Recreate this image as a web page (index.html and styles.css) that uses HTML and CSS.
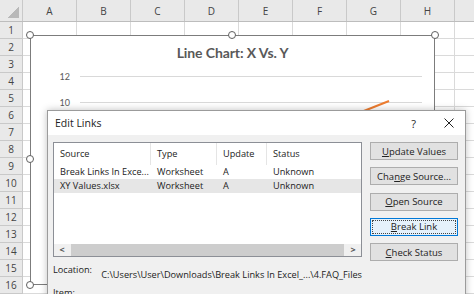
FILE: index.html
```html
<!DOCTYPE html>
<html lang="en">

<head>
    <meta charset="UTF-8" />
    <meta name="viewport" content="width=device-width, initial-scale=1.0" />
    <title>Edit Links</title>
    <link rel="stylesheet" href="styles.css">
</head>

<body>
    <table class="sheet">
        <colgroup>
            <col class="col-rh">
            <col class="col"><col class="col"><col class="col"><col class="col">
            <col class="col"><col class="col"><col class="col"><col class="col">
            <col class="col-rest">
        </colgroup>
        <tr class="head">
            <th class="corner"></th>
            <th>A</th><th>B</th><th>C</th><th>D</th><th>E</th><th>F</th><th>G</th><th>H</th><th></th>
        </tr>
        <tr><th>1</th><td></td><td></td><td></td><td></td><td></td><td></td><td></td><td></td><td></td></tr>
        <tr><th>2</th><td></td><td></td><td></td><td></td><td></td><td></td><td></td><td></td><td></td></tr>
        <tr><th>3</th><td></td><td></td><td></td><td></td><td></td><td></td><td></td><td></td><td></td></tr>
        <tr><th>4</th><td></td><td></td><td></td><td></td><td></td><td></td><td></td><td></td><td></td></tr>
        <tr><th>5</th><td></td><td></td><td></td><td></td><td></td><td></td><td></td><td></td><td></td></tr>
        <tr><th>6</th><td></td><td></td><td></td><td></td><td></td><td></td><td></td><td></td><td></td></tr>
        <tr><th>7</th><td></td><td></td><td></td><td></td><td></td><td></td><td></td><td></td><td></td></tr>
        <tr><th>8</th><td></td><td></td><td></td><td></td><td></td><td></td><td></td><td></td><td></td></tr>
        <tr><th>9</th><td></td><td></td><td></td><td></td><td></td><td></td><td></td><td></td><td></td></tr>
        <tr><th>10</th><td></td><td></td><td></td><td></td><td></td><td></td><td></td><td></td><td></td></tr>
        <tr><th>11</th><td></td><td></td><td></td><td></td><td></td><td></td><td></td><td></td><td></td></tr>
        <tr><th>12</th><td></td><td></td><td></td><td></td><td></td><td></td><td></td><td></td><td></td></tr>
        <tr><th>13</th><td></td><td></td><td></td><td></td><td></td><td></td><td></td><td></td><td></td></tr>
        <tr><th>14</th><td></td><td></td><td></td><td></td><td></td><td></td><td></td><td></td><td></td></tr>
        <tr><th>15</th><td></td><td></td><td></td><td></td><td></td><td></td><td></td><td></td><td></td></tr>
        <tr><th>16</th><td></td><td></td><td></td><td></td><td></td><td></td><td></td><td></td><td></td></tr>
    </table>

    <div class="chart">
        <span class="handle h-tl"></span>
        <span class="handle h-tm"></span>
        <span class="handle h-tr"></span>
        <span class="handle h-ml"></span>
        <span class="handle h-bl"></span>

        <div class="chart-title">Line Chart: X Vs. Y</div>
        <svg class="plot" width="403" height="200" viewBox="0 0 403 200">
            <line x1="49" y1="14.5" x2="391" y2="14.5" stroke="#d9d9d9" stroke-width="1" />
            <line x1="49" y1="40.5" x2="391" y2="40.5" stroke="#d9d9d9" stroke-width="1" />
            <text x="39" y="17.5" text-anchor="end" class="axis">12</text>
            <text x="39" y="43.5" text-anchor="end" class="axis">10</text>
            <!-- series, mostly hidden behind the dialog -->
            <line x1="300" y1="62" x2="358" y2="39" stroke="#ed7d31" stroke-width="2" />
        </svg>
    </div>

    <div class="dialog">
        <div class="titlebar">
            <span class="dlg-title">Edit Links</span>
            <span class="help">?</span>
            <svg class="close" width="10" height="10" viewBox="0 0 10 10">
                <path d="M0.5 0.5 L9.5 9.5 M9.5 0.5 L0.5 9.5" stroke="#222" stroke-width="1" fill="none" />
            </svg>
        </div>

        <div class="dlg-body">
            <div class="left">
                <div class="list">
                    <div class="list-head">
                        <span class="c-src">Source</span>
                        <span class="c-type">Type</span>
                        <span class="c-upd">Update</span>
                        <span class="c-status">Status</span>
                    </div>
                    <div class="list-row">
                        <span class="c-src">Break Links In Exce...</span>
                        <span class="c-type">Worksheet</span>
                        <span class="c-upd">A</span>
                        <span class="c-status">Unknown</span>
                    </div>
                    <div class="list-row selected">
                        <span class="c-src">XY Values.xlsx</span>
                        <span class="c-type">Worksheet</span>
                        <span class="c-upd">A</span>
                        <span class="c-status">Unknown</span>
                    </div>
                    <div class="list-fill"></div>
                    <div class="hscroll">
                        <span class="arrow">&lt;</span>
                        <span class="thumb"></span>
                        <span class="arrow">&gt;</span>
                    </div>
                </div>

                <div class="location">
                    <span class="loc-label">Location:</span>
                    <span class="loc-path">C:\Users\User\Downloads\Break Links In Excel_...\4.FAQ_Files</span>
                </div>
                <div class="item">Item:</div>
            </div>

            <div class="buttons">
                <button class="btn"><u>U</u>pdate Values</button>
                <button class="btn">Cha<u>n</u>ge Source...</button>
                <button class="btn"><u>O</u>pen Source</button>
                <button class="btn focused"><u>B</u>reak Link</button>
                <button class="btn"><u>C</u>heck Status</button>
            </div>
        </div>
    </div>
</body>

</html>
```

FILE: styles.css
```css
html,
body {
    margin: 0;
    width: 474px;
    height: 294px;
    overflow: hidden;
}

body {
    position: relative;
    background: #fff;
    font-family: "Open Sans", "Noto Sans", sans-serif;
    color: #222;
}

/* ---- worksheet grid ---- */

.sheet {
    border-collapse: collapse;
    table-layout: fixed;
    width: 476px;
    margin: -1px 0 0 -1px;
}

.col-rh {
    width: 23px;
}

.col {
    width: 54px;
}

.col-rest {
    width: 21px;
}

.sheet td,
.sheet th {
    padding: 0;
    border: 1px solid #dadada;
    height: 16px;
}

.sheet th {
    background: #e9e9e9;
    border-color: #c9c9c9;
    font-weight: normal;
    font-size: 10px;
    color: #444;
    text-align: center;
}

.sheet .head th {
    height: 21px;
    border-bottom-color: #bdbdbd;
}

.sheet .corner {
    background: #e9e9e9 linear-gradient(to top left, #b9b9b9 50%, transparent 51%) no-repeat right 3px bottom 3px / 11px 11px;
}

/* ---- chart ---- */

.chart {
    position: absolute;
    left: 30px;
    top: 35px;
    width: 405px;
    height: 250px;
    box-sizing: border-box;
    border: 1px solid #7c7c7c;
    background: #fff;
}

.handle {
    position: absolute;
    width: 8px;
    height: 8px;
    box-sizing: border-box;
    border: 1px solid #5f5f5f;
    border-radius: 50%;
    background: #fff;
    z-index: 2;
}

.h-tl { left: -5px; top: -5px; }
.h-tm { left: 197px; top: -5px; }
.h-tr { right: -5px; top: -5px; }
.h-ml { left: -5px; top: 119px; }
.h-bl { left: -5px; bottom: -5px; }

.chart-title {
    padding-top: 8px;
    height: 18px;
    line-height: 18px;
    text-align: center;
    font-family: Lato, "Open Sans", sans-serif;
    font-weight: bold;
    font-size: 14px;
    color: #595959;
    letter-spacing: -0.1px;
}

.plot {
    display: block;
}

.plot .axis {
    font-family: Lato, "Open Sans", sans-serif;
    font-size: 9px;
    fill: #595959;
}

/* ---- Edit Links dialog ---- */

.dialog {
    position: absolute;
    left: 47px;
    top: 110px;
    width: 419px;
    height: 200px;
    box-sizing: border-box;
    border: 1px solid #9b9b9b;
    background: #f0f0f0;
    box-shadow: 0 0 7px rgba(0, 0, 0, 0.25);
    font-size: 9.2px;
}

.titlebar {
    display: flex;
    align-items: center;
    height: 24px;
    background: #fff;
    padding: 0 11px 0 7px;
}

.dlg-title {
    flex: 1;
    font-size: 10.5px;
}

.help {
    font-size: 11px;
    margin-right: 28px;
}

.dlg-body {
    display: flex;
    gap: 8px;
    padding: 7px 7px 0 5px;
}

.left {
    width: 309px;
}

.list {
    display: flex;
    flex-direction: column;
    height: 115px;
    box-sizing: border-box;
    border: 1px solid #8c8f96;
    background: #fff;
}

.list-head,
.list-row {
    display: flex;
    white-space: nowrap;
}

.list-head {
    height: 22px;
    line-height: 22px;
}

.list-head span {
    border-right: 1px solid #e5e5e5;
}

.list-head .c-status {
    border-right: none;
}

.list-row {
    height: 14px;
    line-height: 14px;
}

.list-row.selected {
    background: #e6e6e6;
}

.c-src,
.c-type,
.c-upd,
.c-status {
    box-sizing: border-box;
    padding-left: 6px;
    overflow: hidden;
}

.c-src { width: 97px; }
.c-type { width: 66px; }
.c-upd { width: 50px; }
.c-status { flex: 1; }

.list-fill {
    flex: 1;
}

.hscroll {
    display: flex;
    height: 12px;
    background: #f0f0f0;
    font-size: 9px;
    line-height: 12px;
}

.arrow {
    width: 16px;
    text-align: center;
    color: #555;
    font-weight: bold;
}

.thumb {
    flex: 1;
    background: #cdcdcd;
    margin: 0 1px;
}

.location {
    display: flex;
    padding-top: 6px;
}

.loc-label {
    width: 53px;
}

.loc-path {
    padding-top: 5px;
    white-space: nowrap;
}

.item {
    margin-top: 5px;
}

.buttons {
    display: flex;
    flex-direction: column;
    gap: 7.3px;
}

.btn {
    width: 88px;
    height: 18px;
    padding: 0;
    border: 1px solid #adadad;
    background: #e1e1e1;
    font-family: "Open Sans", "Noto Sans", sans-serif;
    font-size: 9.5px;
    color: #222;
}

.btn.focused {
    border-color: #0078d7;
    background: #e5f1fb;
    outline: 1px dotted #444;
    outline-offset: -3px;
}
```
